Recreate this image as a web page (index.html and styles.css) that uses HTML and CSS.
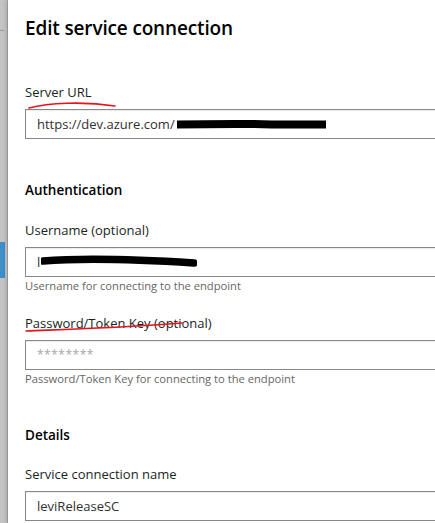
FILE: index.html
```html
<!DOCTYPE html>
<html lang="en">
<head>
  <meta charset="UTF-8">
  <meta name="viewport" content="width=device-width, initial-scale=1.0">
  <title>Edit service connection</title>
  <link rel="stylesheet" href="styles.css">
</head>
<body>
  <div class="screen">
    <div class="backdrop">
      <div class="backdrop-line"></div>
      <div class="backdrop-blue"></div>
    </div>
    <div class="panel">
      <div class="panel-header">
        <h1 class="panel-title">Edit service connection</h1>
        <span class="close-btn">
          <svg width="15" height="15" viewBox="0 0 16 16"><path d="M2 2 L14 14 M14 2 L2 14" stroke="#222" stroke-width="1.3" fill="none"/></svg>
        </span>
      </div>

      <div class="field field-first">
        <label class="field-label marked">Server URL
          <svg class="ink ink-underline" width="90" height="10" viewBox="0 0 90 10"><path d="M1 7 C 20 2, 55 0, 87 5" stroke="#e3141b" stroke-width="1.6" fill="none" stroke-linecap="round"/></svg>
        </label>
        <div class="text-input">https://dev.azure.com/<svg class="redact" width="154" height="12" viewBox="0 0 154 12"><path d="M2 6.5 L60 6 C 80 5.5, 95 7, 110 6.5 L151 6.5" stroke="#000" stroke-width="8" fill="none"/></svg></div>
      </div>

      <h2 class="section-title">Authentication</h2>

      <div class="field">
        <label class="field-label">Username (optional)</label>
        <div class="text-input">l<svg class="redact redact-user" width="156" height="14" viewBox="0 0 156 14"><path d="M2 6 C 40 3, 90 4, 153 8" stroke="#000" stroke-width="7.5" fill="none" stroke-linecap="round"/></svg></div>
        <div class="field-help">Username for connecting to the endpoint</div>
      </div>

      <div class="field">
        <label class="field-label marked">Password/Token Key (optional)
          <svg class="ink ink-strike" width="160" height="12" viewBox="0 0 160 12"><path d="M1 10 C 50 8, 110 6, 157 2" stroke="#e3141b" stroke-width="1.6" fill="none" stroke-linecap="round"/></svg>
        </label>
        <div class="text-input placeholder">********</div>
        <div class="field-help">Password/Token Key for connecting to the endpoint</div>
      </div>

      <h2 class="section-title section-details">Details</h2>

      <div class="field">
        <label class="field-label">Service connection name</label>
        <div class="text-input">leviReleaseSC</div>
      </div>
    </div>
  </div>
</body>
</html>
```

FILE: styles.css
```css
html, body {
  margin: 0;
  padding: 0;
  width: 100%;
  height: 100%;
  overflow: hidden;
  background: #fff;
}
* {
  margin: 0;
  padding: 0;
  box-sizing: border-box;
}
.screen {
  display: flex;
  height: 100%;
  font-family: "Open Sans", "Noto Sans", sans-serif;
  color: #323130;
}
.backdrop {
  width: 8px;
  flex-shrink: 0;
  background-color: #c4c4c4;
  border-right: 1px solid #a9a9a9;
}
.backdrop-line {
  margin-top: 30px;
  height: 1px;
  width: 4px;
  background-color: #9a9a9a;
}
.backdrop-blue {
  margin-top: 211px;
  height: 36px;
  width: 5px;
  background-color: #3f8fcb;
}
/* Panel */
.panel {
  width: 460px;
  flex-shrink: 0;
  padding: 14px 17px 0 17px;
  box-shadow: -2px 0 4px rgba(0, 0, 0, 0.15);
}
.panel-header {
  display: flex;
  align-items: center;
  justify-content: space-between;
}
.panel-title {
  font-size: 19px;
  line-height: 28px;
  font-weight: 600;
  color: #000;
  letter-spacing: -0.15px;
}
.close-btn {
  display: flex;
  margin-right: -2px;
}
.field-first {
  margin-top: 40px;
}
.field {
  margin-bottom: 20px;
}
.field-label {
  display: block;
  font-size: 13px;
  line-height: 20px;
  margin-bottom: 7px;
  color: #201f1e;
}
.marked {
  position: relative;
}
.ink {
  position: absolute;
  pointer-events: none;
}
.ink-underline {
  left: 3px;
  top: 19px;
}
.ink-strike {
  left: 0;
  top: 8px;
}
.text-input {
  height: 30px;
  border: 1px solid #8a8886;
  padding: 0 11px;
  font-size: 13px;
  line-height: 28px;
  color: #323130;
  display: flex;
  align-items: center;
  box-shadow: inset 0 1px 1px rgba(0, 0, 0, 0.08);
}
.text-input.placeholder {
  color: #a6a6a6;
  font-size: 12px;
  letter-spacing: 0.5px;
}
.redact {
  margin-left: 0;
}
.redact-user {
  margin-left: 1px;
}
.field-help {
  font-size: 11.2px;
  line-height: 15px;
  margin-top: 1px;
  color: #666;
}
.section-title {
  font-size: 13.5px;
  line-height: 20px;
  font-weight: 600;
  color: #000;
  margin-top: 41px;
  margin-bottom: 20px;
}
.section-details {
  margin-top: 39px;
  margin-bottom: 19px;
}
```
